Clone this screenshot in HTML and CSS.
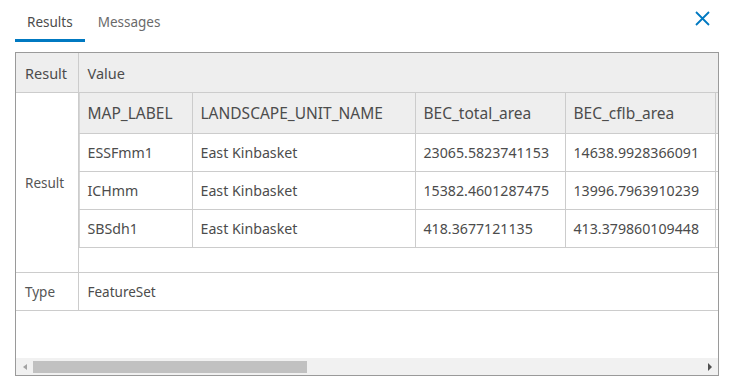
FILE: index.html
```html
<!DOCTYPE html>
<html>
<head>
<meta charset="utf-8">
<link rel="stylesheet" href="styles.css">
</head>
<body>
<div class="top">
  <div class="tabs">
    <div class="tab active">Results</div>
    <div class="tab">Messages</div>
  </div>
  <button class="close" aria-label="Close">
    <svg width="15" height="15" viewBox="0 0 15 15"><path d="M1 1 L14 14 M14 1 L1 14" stroke="#0079c1" stroke-width="1.8" fill="none"/></svg>
  </button>
</div>
<div class="panel">
  <div class="viewport">
    <table class="outer">
      <colgroup><col class="c-key"><col class="c-val"></colgroup>
      <tr class="ohead"><th>Result</th><th>Value</th></tr>
      <tr class="orow-result">
        <td class="key">Result</td>
        <td class="val">
          <table class="inner">
            <colgroup><col class="i1"><col class="i2"><col class="i3"><col class="i4"><col class="i5"></colgroup>
            <tr class="ihead"><th>MAP_LABEL</th><th>LANDSCAPE_UNIT_NAME</th><th>BEC_total_area</th><th>BEC_cflb_area</th><th></th></tr>
            <tr><td>ESSFmm1</td><td>East Kinbasket</td><td>23065.5823741153</td><td>14638.9928366091</td><td></td></tr>
            <tr><td>ICHmm</td><td>East Kinbasket</td><td>15382.4601287475</td><td>13996.7963910239</td><td></td></tr>
            <tr><td>SBSdh1</td><td>East Kinbasket</td><td>418.3677121135</td><td>413.379860109448</td><td></td></tr>
          </table>
        </td>
      </tr>
      <tr class="orow"><td class="key">Type</td><td class="plain">FeatureSet</td></tr>
    </table>
  </div>
  <div class="hscroll">
    <div class="arrow left"><span class="tri-left"></span></div>
    <div class="track"><div class="thumb"></div></div>
    <div class="arrow right"><span class="tri-right"></span></div>
  </div>
</div>
</body>
</html>
```

FILE: styles.css
```css
html, body {
  margin: 0;
  padding: 0;
  background: #fff;
}
body {
  font-family: "Noto Sans", "Open Sans", sans-serif;
  color: #4c4c4c;
  font-size: 14px;
}
.top {
  display: flex;
  align-items: flex-start;
  width: 704px;
  margin-left: 15px;
}
.tabs {
  display: flex;
}
.tab {
  padding: 12px 12px 7px;
  line-height: 20px;
  font-size: 13.5px;
  color: #6a6a6a;
  border-bottom: 3px solid transparent;
}
.tab.active {
  color: #4c4c4c;
  border-bottom-color: #0079c1;
}
.tab + .tab {
  padding-left: 13px;
}
.close {
  margin-left: auto;
  margin-top: 11px;
  margin-right: 9px;
  padding: 0;
  border: 0;
  background: none;
  width: 15px;
  height: 15px;
  display: block;
}
.close svg { display: block; }
.panel {
  margin: 10px 0 0 15px;
  width: 702px;
  border: 1px solid #9a9a9a;
}
.viewport {
  height: 305px;
  overflow: hidden;
}
table {
  border-collapse: collapse;
  table-layout: fixed;
}
.outer {
  width: 900px;
}
.c-key { width: 62px; }
.outer th, .outer td {
  text-align: left;
  font-weight: normal;
  padding: 0 8px 0 9px;
  border-bottom: 1px solid #cccccc;
  border-right: 1px solid #cccccc;
  white-space: nowrap;
}
.ohead th {
  background: #eeeeee;
  height: 39px;
  font-size: 14.5px;
  color: #4c4c4c;
}
.outer td.key {
  font-size: 13.5px;
  color: #555;
}
.outer td.val {
  padding: 0 0 24px 0;
  vertical-align: top;
}
.orow td {
  height: 37px;
}
.outer td.plain {
  font-size: 13.5px;
}
.inner {
  width: 780px;
  border-left: 1px solid #d6d6d6;
}
.i1 { width: 113px; }
.i2 { width: 223px; }
.i3 { width: 150px; }
.i4 { width: 150px; }
.i5 { width: 144px; }
.inner th, .inner td {
  text-align: left;
  font-weight: normal;
  padding: 0 6px 0 8px;
  border-bottom: 1px solid #cccccc;
  border-right: 1px solid #cccccc;
  white-space: nowrap;
  overflow: hidden;
}
.ihead th {
  background: #eeeeee;
  height: 40px;
  font-size: 15.5px;
}
.inner td {
  height: 37px;
  font-size: 14.2px;
}
.hscroll {
  display: flex;
  height: 17px;
  background: #f1f1f1;
}
.arrow {
  width: 17px;
  display: flex;
  align-items: center;
  justify-content: center;
}
.track {
  flex: 1;
  padding: 3px 0 2px;
}
.thumb {
  width: 274px;
  height: 12px;
  background: #c1c1c1;
}
.tri-left {
  width: 0; height: 0;
  border-top: 3px solid transparent;
  border-bottom: 3px solid transparent;
  border-right: 4px solid #a3a3a3;
}
.tri-right {
  width: 0; height: 0;
  border-top: 4px solid transparent;
  border-bottom: 4px solid transparent;
  border-left: 4px solid #505050;
}
```
